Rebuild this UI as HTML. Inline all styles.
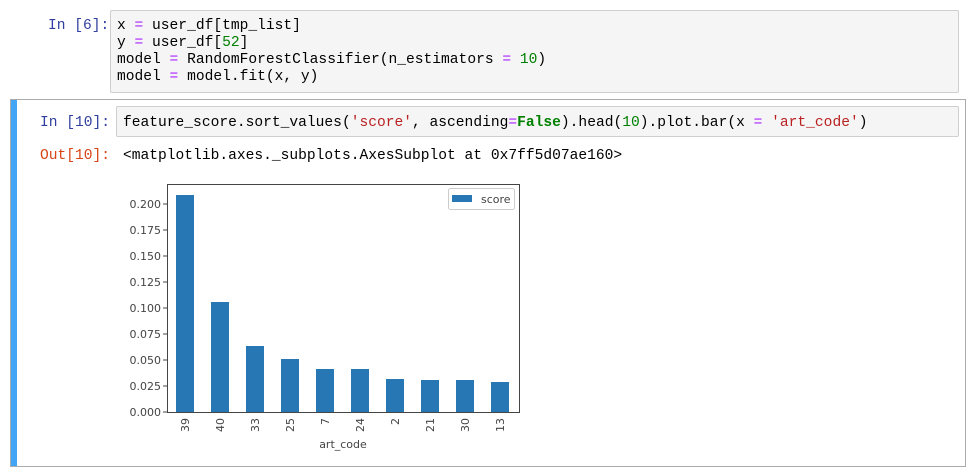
<!DOCTYPE html>
<html><head><style>
body{margin:0;width:973px;height:472px;background:#fff;position:relative;overflow:hidden;font-family:"Liberation Mono",monospace;font-size:14.6px;}
.a{position:absolute;white-space:pre;line-height:17px;}
.box{position:absolute;background:#f5f5f5;border:1px solid #cfcfcf;border-radius:2px;}
.p{color:#303f9f}.o{color:#d84315}
.k{color:#aa22ff}.n{color:#008000}.s{color:#ba2121}.b{color:#008000;font-weight:bold}
</style></head><body>
<div class="box" style="left:110px;top:10px;width:847px;height:81px"></div>
<div class="a p" style="left:48px;top:18px">In [6]:</div>
<div class="a" style="left:117px;top:18px">x <span class="k">=</span> user_df[tmp_list]
y <span class="k">=</span> user_df[<span class="n">52</span>]
model <span class="k">=</span> RandomForestClassifier(n_estimators <span class="k">=</span> <span class="n">10</span>)
model <span class="k">=</span> model.fit(x, y)</div>
<div style="position:absolute;left:10px;top:99px;width:954px;height:366px;border:1px solid #ababab"></div>
<div style="position:absolute;left:11px;top:100px;width:6px;height:366px;background:#42a5f5"></div>
<div class="box" style="left:116px;top:106px;width:841px;height:29px"></div>
<div class="a p" style="left:40px;top:115px">In [10]:</div>
<div class="a" style="left:123px;top:115px">feature_score.sort_values(<span class="s">'score'</span>, ascending<span class="k">=</span><span class="b">False</span>).head(<span class="n">10</span>).plot.bar(x <span class="k">=</span> <span class="s">'art_code'</span>)</div>
<div class="a o" style="left:40px;top:148px">Out[10]:</div>
<div class="a" style="left:123px;top:148px">&lt;matplotlib.axes._subplots.AxesSubplot at 0x7ff5d07ae160&gt;</div>
<svg style="position:absolute;left:0;top:0" width="973" height="472" font-family="'DejaVu Sans',sans-serif" font-size="11" fill="#444">
<g fill="#2677b4">
<rect x="176" y="195" width="18" height="217"/>
<rect x="211" y="302" width="18" height="110"/>
<rect x="246" y="346" width="18" height="66"/>
<rect x="281" y="359" width="18" height="53"/>
<rect x="316" y="369" width="18" height="43"/>
<rect x="351" y="369" width="18" height="43"/>
<rect x="386" y="379" width="18" height="33"/>
<rect x="421" y="380" width="18" height="32"/>
<rect x="456" y="380" width="18" height="32"/>
<rect x="491" y="382" width="18" height="30"/>
</g>
<rect x="167.5" y="184.5" width="352" height="228" fill="none" stroke="#444" stroke-width="1"/>
<g stroke="#444"><line x1="163" x2="167" y1="204" y2="204"/><line x1="163" x2="167" y1="230" y2="230"/><line x1="163" x2="167" y1="256" y2="256"/><line x1="163" x2="167" y1="282" y2="282"/><line x1="163" x2="167" y1="308" y2="308"/><line x1="163" x2="167" y1="334" y2="334"/><line x1="163" x2="167" y1="360" y2="360"/><line x1="163" x2="167" y1="386" y2="386"/><line x1="163" x2="167" y1="412" y2="412"/></g>
<g text-anchor="end"><text x="161" y="208">0.200</text><text x="161" y="234">0.175</text><text x="161" y="260">0.150</text><text x="161" y="286">0.125</text><text x="161" y="312">0.100</text><text x="161" y="338">0.075</text><text x="161" y="364">0.050</text><text x="161" y="390">0.025</text><text x="161" y="416">0.000</text></g>
<g text-anchor="end">
<text transform="translate(189,418) rotate(-90)">39</text>
<text transform="translate(224,418) rotate(-90)">40</text>
<text transform="translate(259,418) rotate(-90)">33</text>
<text transform="translate(294,418) rotate(-90)">25</text>
<text transform="translate(329,418) rotate(-90)">7</text>
<text transform="translate(364,418) rotate(-90)">24</text>
<text transform="translate(399,418) rotate(-90)">2</text>
<text transform="translate(434,418) rotate(-90)">21</text>
<text transform="translate(469,418) rotate(-90)">30</text>
<text transform="translate(504,418) rotate(-90)">13</text>
</g>
<text x="343" y="448" text-anchor="middle">art_code</text>
<rect x="448.5" y="188.5" width="66" height="21" fill="#fff" stroke="#ccc" rx="2"/>
<rect x="452" y="195" width="20" height="7" fill="#2677b4"/>
<text x="481" y="203">score</text>
</svg>
</body></html>
